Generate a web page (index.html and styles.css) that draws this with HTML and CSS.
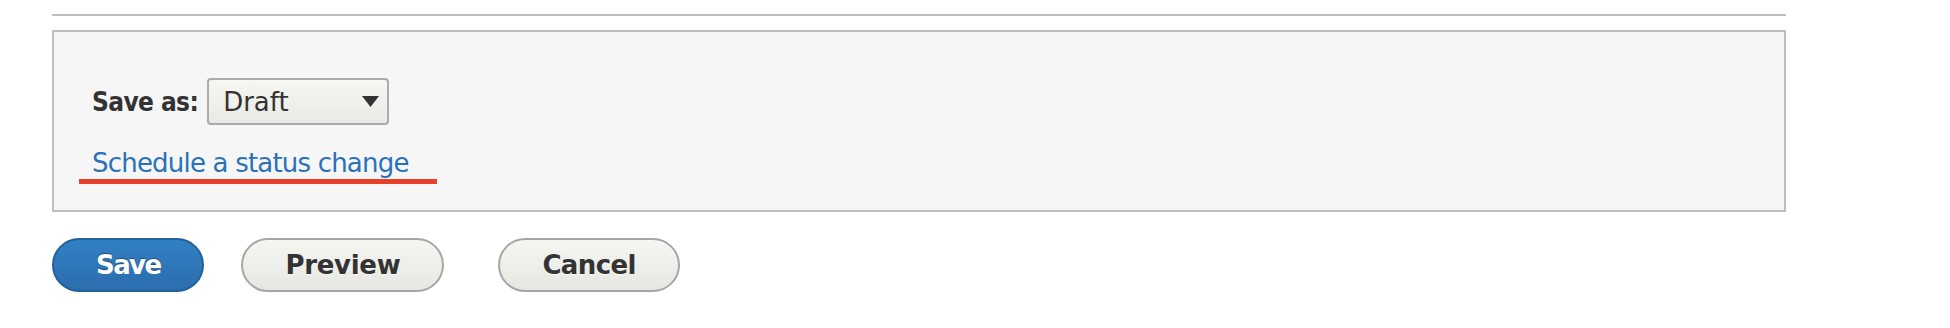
FILE: index.html
```html
<!DOCTYPE html>
<html lang="en">
<head>
<meta charset="utf-8">
<title>Save form</title>
<link rel="stylesheet" href="styles.css">
</head>
<body>
<div class="page">
  <div class="rule"></div>
  <div class="panel">
    <div class="field">
      <label class="label" for="state">Save as:</label>
      <div class="select" id="state">
        <span class="select-value">Draft</span>
        <svg class="select-arrow" width="17" height="11" viewBox="0 0 17 11"><polygon points="0,0 17,0 8.5,11" fill="#333"/></svg>
      </div>
    </div>
    <div class="link-row">
      <a class="link" href="#">Schedule a status change</a>
      <span class="annotation"></span>
    </div>
  </div>
  <div class="actions">
    <button class="btn btn-primary">Save</button>
    <button class="btn">Preview</button>
    <a class="btn btn-link" href="#">Cancel</a>
  </div>
</div>
</body>
</html>
```

FILE: styles.css
```css
html, body {
  margin: 0;
  padding: 0;
  background: #ffffff;
}
body {
  font-family: "DejaVu Sans", "Liberation Sans", sans-serif;
  color: #333333;
}
.page {
  padding: 14px 0 0 52px;
  width: 1734px;
}
.rule {
  height: 2px;
  background: #bebdb7;
}
.panel {
  margin-top: 14px;
  height: 178px;
  border: 2px solid #bebebe;
  background: #f6f6f6;
  padding: 0 0 0 38px;
  box-sizing: content-box;
}
.field {
  display: flex;
  align-items: center;
  margin-top: 46px;
}
.label {
  font-family: "DejaVu Sans Condensed", "DejaVu Sans", sans-serif;
  font-size: 26px;
  font-weight: bold;
  color: #333;
  margin-right: 9px;
  letter-spacing: -0.6px;
}
.select {
  border: 2px solid #ababab;
  border-radius: 4px;
  background: linear-gradient(#f6f6f3, #e9e9e5);
  display: flex;
  align-items: center;
  justify-content: space-between;
  padding: 0 8px 0 14px;
  box-sizing: border-box;
  width: 182px;
  height: 47px;
}
.select-value {
  font-size: 26px;
  color: #333;
}
.select-arrow {
  display: block;
}
.link-row {
  position: relative;
  display: inline-block;
  margin-top: 20px;
  line-height: 36px;
}
.link {
  font-size: 26px;
  color: #2a72b8;
  text-decoration: none;
  letter-spacing: -0.8px;
}
.annotation {
  position: absolute;
  left: -13px;
  right: -28px;
  bottom: 1px;
  height: 5px;
  background: #e8412b;
}
.actions {
  display: flex;
  align-items: center;
  margin-top: 26px;
}
.btn {
  font-family: "DejaVu Sans", "Liberation Sans", sans-serif;
  font-size: 26px;
  font-weight: bold;
  height: 54px;
  padding: 0 42px;
  border-radius: 27px;
  border: 2px solid #a6a6a6;
  background: linear-gradient(#f5f5f2, #e7e7e2);
  color: #333;
  text-shadow: 0 1px 0 rgba(255,255,255,0.6);
  box-sizing: border-box;
  display: inline-flex;
  align-items: center;
  justify-content: center;
  text-decoration: none;
  margin-right: 37px;
  letter-spacing: -0.3px;
}
.btn-primary {
  background: linear-gradient(#3180c4, #2b6eae);
  border-color: #24609a;
  color: #ffffff;
  text-shadow: 0 -1px 1px rgba(0,0,0,0.35);
  letter-spacing: -1.6px;
}
.btn-link {
  margin-left: 17px;
  letter-spacing: -0.6px;
}
```
